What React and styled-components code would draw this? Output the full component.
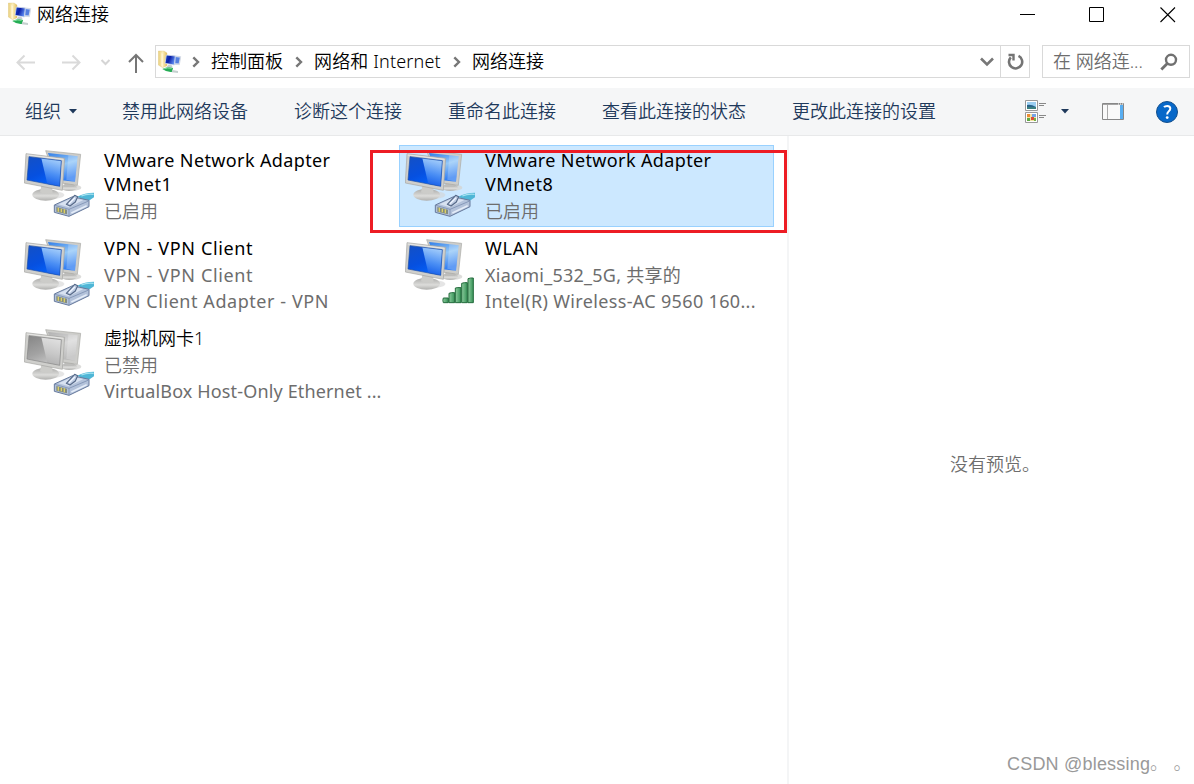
import React from 'react';
import styled, { createGlobalStyle } from 'styled-components';

const GlobalStyle = createGlobalStyle`
  * {
    box-sizing: border-box;
  }

  body {
    margin: 0;
    background: #fff;
    font-family: "Noto Sans", "Noto Sans CJK SC", sans-serif;
    font-size: 18px;
    overflow: hidden;
  }

  svg {
    display: block;
    flex: none;
  }
`;

const Window = styled.div`
  position: relative;
  width: 1194px;
  height: 784px;
  display: flex;
  flex-direction: column;
  background: #fff;
  white-space: nowrap;
`;

const TitleBar = styled.header`
  height: 45px;
  padding: 2px 18px 0 8px;
  display: flex;
  align-items: flex-start;
`;

const Title = styled.h1`
  flex: 1;
  margin: 0 0 0 5px;
  font-family: "Noto Sans CJK SC", sans-serif;
  font-size: 18px;
  font-weight: 350;
  line-height: 22px;
  color: #000;
`;

const WindowButtons = styled.div`
  display: flex;
  gap: 54px;
  padding-top: 5px;
`;

const AddressRow = styled.div`
  height: 43px;
  padding: 0 4px 0 16px;
  display: flex;
  align-items: flex-start;
`;

const NavButtons = styled.nav`
  width: 139px;
  height: 34px;
`;

const AddressBox = styled.div`
  width: 875px;
  height: 33px;
  border: 1px solid #d9d9d9;
  display: flex;
  align-items: center;
  padding-left: 2px;
`;

const Crumbs = styled.div`
  flex: 1;
  display: flex;
  align-items: center;
  margin-left: 10px;
`;

const Crumb = styled.span`
  margin: 0 9px 0 11px;
  width: ${({ $width }) => $width}px;
  font-weight: 350;
  line-height: 28px;
  padding-bottom: 2px;
  letter-spacing: ${({ $spacing }) => $spacing || 0}px;
  color: #000;
`;

const RefreshButton = styled.div`
  width: 29px;
  height: 31px;
  margin-left: 5px;
  padding-left: 2px;
  border-left: 1px solid #d9d9d9;
  display: flex;
  align-items: center;
  justify-content: center;
`;

const SearchBox = styled.div`
  width: 148px;
  height: 33px;
  margin-left: 12px;
  padding: 0 11px 0 10px;
  border: 1px solid #d9d9d9;
  display: flex;
  align-items: center;
  justify-content: space-between;
  font-weight: 350;
  color: #6d6d6d;

  span {
    padding-bottom: 3px;
  }
`;

const Toolbar = styled.div`
  height: 48px;
  padding: 0 16px 0 25px;
  display: flex;
  align-items: center;
  background: #f5f6f7;
  border-bottom: 1px solid #e8e9ea;
`;

const Command = styled.span`
  margin-right: ${({ $menu }) => ($menu ? 45 : 46)}px;
  padding-bottom: 4px;
  display: flex;
  align-items: center;
  gap: 8px;
  font-family: "Noto Sans CJK SC", sans-serif;
  font-weight: 350;
  line-height: 26px;
  color: #1e395b;

  svg {
    margin-top: 4px;
  }
`;

const ToolIcons = styled.div`
  margin-left: auto;
  display: flex;
  align-items: center;
`;

const Spacer = styled.span`
  width: ${({ $size }) => $size}px;
`;

const Content = styled.main`
  flex: 1;
  display: flex;
`;

const FileArea = styled.section`
  width: 787px;
  padding: 9px 0 0 18px;
  display: grid;
  grid-template-columns: 375px 375px;
  grid-template-rows: 82px 83px 84px;
  row-gap: 7px;
  column-gap: 6px;
`;

const Item = styled.article`
  padding: 4px 5px;
  display: flex;
  align-items: flex-start;
  border: 1px solid ${({ $selected }) => ($selected ? '#99d1ff' : 'transparent')};
  background: ${({ $selected }) => ($selected ? '#cce8ff' : 'transparent')};
`;

const ItemText = styled.div`
  margin-left: 8px;
  margin-top: ${({ $top }) => $top}px;
`;

const Line = styled.div`
  height: ${({ $height }) => $height}px;
  line-height: 24px;
  font-weight: ${({ $cjk }) => ($cjk ? 350 : 400)};
  color: ${({ $muted }) => ($muted ? '#6d6d6d' : '#000')};
  letter-spacing: ${({ $spacing }) => $spacing || 0}px;
`;

const Preview = styled.aside`
  flex: 1;
  border-left: 2px solid #f4f5f6;
  padding: 314px 0 0 161px;
  font-family: "Noto Sans CJK SC", sans-serif;
  font-weight: 350;
  line-height: 26px;
  color: #6d6d6d;
`;

const Highlight = styled.div`
  position: absolute;
  left: 370px;
  top: 150px;
  width: 417px;
  height: 83px;
  border: 3px solid #ed1c24;
`;

const Watermark = styled.div`
  position: absolute;
  left: 1007px;
  top: 752px;
  font-family: "Liberation Sans", "Noto Sans CJK SC", sans-serif;
  font-size: 18px;
  font-weight: 300;
  line-height: 24px;
  letter-spacing: 0.2px;
  color: #999;
`;

const FolderIcon = () => (
  <svg width="24" height="24" viewBox="24 5 72 72">
    <defs>
      <linearGradient id="folder" x1="0" x2="1">
        <stop offset="0" stopColor="#e9cf7c" />
        <stop offset="0.5" stopColor="#fbeebc" />
        <stop offset="1" stopColor="#e3bf5c" />
      </linearGradient>
      <linearGradient id="smallScreen" x1="0" y1="0" x2="1" y2="0.4">
        <stop offset="0" stopColor="#1648c8" />
        <stop offset="0.5" stopColor="#0b1fa8" />
        <stop offset="1" stopColor="#5d8cf0" />
      </linearGradient>
    </defs>
    <path d="M25 8 L42 8 L51 14 L51 52 L38 58 L25 50 Z" fill="url(#folder)" stroke="#dcc27a" strokeWidth="1" />
    <path d="M34 14 L39 17 V56 L34 53 Z" fill="#fff4cf" />
    <path d="M66 22 L92 25 L88 49 L66 47 Z" fill="#b5c9ee" stroke="#d5dbe5" strokeWidth="3" />
    <path d="M76 26 L89 28 L86 45 L76 44 Z" fill="#547fe0" />
    <path d="M49 20 L76 23 L73 50 L45 45 Z" fill="url(#smallScreen)" stroke="#d2dbea" strokeWidth="2.5" />
    <path d="M55 49 L65 51 L68 57 L49 57 Z" fill="#c4cbd1" />
    <path d="M37 62 Q53 54 69 59 L66 71 Q52 73 37 62" fill="#25ad55" />
    <path d="M40 62 Q53 57 65 60" fill="none" stroke="#82dc9c" strokeWidth="3" />
    <path d="M67 65 L84 68 L84 74 L65 72 Z" fill="#c5d0cf" />
  </svg>
);

const AdapterIcon = ({ id, disabled, wifi }) => (
  <svg width="72" height="72" viewBox="72 42 216 216">
    <defs>
      <linearGradient id={`${id}-front`} x1="0" y1="0" x2="0.5" y2="1">
        <stop offset="0" stopColor={disabled ? '#858585' : '#1450c4'} />
        <stop offset="0.6" stopColor={disabled ? '#a3a3a3' : '#0650e0'} />
        <stop offset="1" stopColor={disabled ? '#c4c4c4' : '#0462fa'} />
      </linearGradient>
      <linearGradient id={`${id}-shine`} x1="0.3" y1="0" x2="0.1" y2="1">
        <stop offset="0" stopColor={disabled ? '#dedede' : '#9cc8fa'} />
        <stop offset="0.5" stopColor={disabled ? '#c8c8c8' : '#4a8ef4'} />
        <stop offset="1" stopColor={disabled ? '#adadad' : '#0a55e8'} />
      </linearGradient>
      <linearGradient id={`${id}-back`} x1="0" y1="0" x2="0.3" y2="1">
        <stop offset="0" stopColor={disabled ? '#b0b0b0' : '#2f7de8'} />
        <stop offset="0.5" stopColor={disabled ? '#d9d9d9' : '#94c8f8'} />
        <stop offset="1" stopColor={disabled ? '#bcbcbc' : '#3580f2'} />
      </linearGradient>
      <linearGradient id={`${id}-base`} x1="0" y1="0" x2="0" y2="1">
        <stop offset="0" stopColor="#a9a9a7" />
        <stop offset="0.6" stopColor="#dcdcda" />
        <stop offset="1" stopColor="#b0b0ae" />
      </linearGradient>
      <linearGradient id={`${id}-bars`} x1="0" y1="0" x2="1" y2="0">
        <stop offset="0" stopColor="#8ccb9d" />
        <stop offset="1" stopColor="#369257" />
      </linearGradient>
    </defs>
    <ellipse cx="219" cy="155" rx="25" ry="9" fill="#d4d4d2" opacity="0.8" />
    <ellipse cx="207" cy="155" rx="24" ry="10" fill={`url(#${id}-base)`} />
    <path d="M194 135 H220 L223 153 H192 Z" fill="#bdbdbb" />
    <path d="M137 44 L242 55 L232 148 L170 139 Z" fill="#cdcdca" stroke="#a9a9a5" strokeWidth="2" strokeLinejoin="round" />
    <path d="M144 51 L233 61 L225 137 L170 131 Z" fill={`url(#${id}-back)`} />
    <path d="M205 58 L233 61 L225 137 L199 131 Z" fill="#fff" opacity="0.22" />
    <ellipse cx="154" cy="177" rx="39" ry="12" fill="#d4d4d4" opacity="0.6" />
    <ellipse cx="137" cy="176" rx="40" ry="18" fill={`url(#${id}-base)`} />
    <path d="M124 149 H155 L158 170 Q141 179 120 169 Z" fill="#ccccc9" />
    <path d="M78 53 L194 67 L187 163 L73 141 Z" fill="#cfcfcc" stroke="#a5a5a1" strokeWidth="2" strokeLinejoin="round" />
    <path d="M80 57 L190 70" fill="none" stroke="#e8e8e6" strokeWidth="3" />
    <path d="M87 62 L184 74 L179 151 L81 132 Z" fill={`url(#${id}-front)`} />
    <path d="M124 67 L184 74 L179 151 L142 144 Z" fill={`url(#${id}-shine)`} />
    <path d="M87 62 L184 74 L179 151 L81 132 Z" fill="none" stroke={disabled ? '#858585' : '#1c4ea8'} strokeWidth="2" />
    {wifi ? (
      <g fill={`url(#${id}-bars)`} stroke="#246b3d" strokeWidth="3" strokeLinejoin="round">
        <path d="M187 219 H202 V233 H187 Q184 226 187 219 Z" />
        <path d="M204 205 Q211 202 221 203 V233 H204 Z" />
        <path d="M223 189 Q230 187 240 188 V233 H223 Z" />
        <path d="M242 175 Q250 172 259 173 V233 H242 Z" />
        <path d="M261 161 Q269 158 277 159 V233 H261 Z" />
      </g>
    ) : (
      <g strokeLinejoin="round">
        <path d="M232 182 Q254 170 282 170 L282 184 L262 197 Z" fill="#4fb6d6" />
        <path d="M244 180 Q260 173 281 175" fill="none" stroke="#a5e2f0" strokeWidth="4" />
        <path d="M163 207 L218 182 L267 193 L267 212 L207 241 L163 229 Z" fill="#b3c2da" stroke="#66799c" strokeWidth="3" />
        <path d="M164 208 L207 220 L266 195 M207 220 V240" fill="none" stroke="#7d90b2" strokeWidth="2.5" />
        <path d="M175 205 L218 186 L250 192 L207 214 Z" fill="#d8e2f1" />
        <path d="M199 205 L224 178 L233 182 L226 198 L210 210 Z" fill="#bccae0" stroke="#566988" strokeWidth="3.5" />
        <path d="M207 203 L225 185" stroke="#eef4ff" strokeWidth="4" />
        <path d="M169 213 L201 221 V235 L169 227 Z" fill="#848d80" />
        <path d="M175 215 V227 M184 218 V229 M193 220 V232" stroke="#ddd165" strokeWidth="4" />
        <path d="M214 231 L260 209" stroke="#e4ecf8" strokeWidth="5" />
      </g>
    )}
  </svg>
);

const Separator = () => (
  <svg width="8" height="12" viewBox="0 0 8 12">
    <path d="M1.3 1.3 L6 6 L1.3 10.7" fill="none" stroke="#777" strokeWidth="2.4" />
  </svg>
);

const DropArrow = () => (
  <svg width="8" height="5" viewBox="0 0 8 5">
    <path d="M0 0 H8 L4 4.5 Z" fill="#1e395b" />
  </svg>
);

const NavIcons = () => (
  <svg width="139" height="34" viewBox="16 45 139 34" fill="none" strokeWidth="2">
    <path d="M35 62.5 H17 M24.5 55.5 L17.5 62.5 L24.5 69.5" stroke="#dadada" />
    <path d="M62 62.5 H80 M72.5 55.5 L79.5 62.5 L72.5 69.5" stroke="#dadada" />
    <path d="M101.5 60 L105.5 64 L109.5 60" stroke="#d5d5d5" />
    <path d="M136 73 V55 M129 62 L136 55 L143 62" stroke="#767676" />
  </svg>
);

const ViewIcon = () => (
  <svg width="22" height="24" viewBox="0 0 22 24">
    <path d="M0.5 0.5 H12.5 V10.5 H0.5 Z M0.5 12.5 H12.5 V22.5 H0.5 Z" fill="#fff" stroke="#999" />
    <path d="M2 2 H11 V9 H2 Z" fill="#9ccff2" />
    <path d="M2 5 Q6 4 11 7 V9 H2 Z" fill="#28648a" />
    <path d="M2 8 H11" stroke="#4f9c76" />
    <path d="M2 14 H11 V21 H2 Z" fill="#f3e2a3" />
    <path d="M2 14 H5 V17 H2 Z" fill="#ec8d35" />
    <path d="M7 14 H11 V17 H7 Z" fill="#75a5e7" />
    <path d="M2 18 H5 V21 H2 Z" fill="#5faa42" />
    <path d="M6 17 H9 V20 H6 Z" fill="#dd4d35" />
    <path d="M9 18 H11 V21 H9 Z" fill="#73b548" />
    <path d="M14 3.5 H21 M14 5.5 H19 M14 15.5 H21 M14 17.5 H19" stroke="#888" />
  </svg>
);

const PaneIcon = () => (
  <svg width="22" height="17" viewBox="0 0 22 17">
    <path d="M0.5 0.5 H21.5 V16.5 H0.5 Z" fill="#f9f9f9" stroke="#878787" />
    <path d="M1 1 H21" stroke="#878787" strokeWidth="1.5" />
    <path d="M5.5 2 V16" stroke="#aaa" />
    <path d="M18 2 H21 V16 H18 Z" fill="#58aef2" />
    <path d="M16 1 H17 M18 1 H19 M20 1 H21" stroke="#fff" />
  </svg>
);

const HelpIcon = () => (
  <svg width="22" height="22" viewBox="0 0 22 22">
    <circle cx="11" cy="11" r="10.5" fill="#0868c9" stroke="#14508d" />
    <path d="M8 6.2 Q9 4.9 11.2 4.9 Q14.3 4.9 14.3 7.6 Q14.3 9.2 12.6 10.5 Q11.2 11.6 11.2 13.6" fill="none" stroke="#fff" strokeWidth="2" />
    <circle cx="11.2" cy="16.6" r="1.4" fill="#fff" />
  </svg>
);

const commands = ['禁用此网络设备', '诊断这个连接', '重命名此连接', '查看此连接的状态', '更改此连接的设置'];

const connections = [
  {
    id: 'vmnet1',
    top: -2,
    lines: [
      { text: 'VMware Network Adapter', height: 24, spacing: 0.37 },
      { text: 'VMnet1', height: 27, spacing: 0.5 },
      { text: '已启用', height: 26, muted: true, cjk: true },
    ],
  },
  {
    id: 'vmnet8',
    top: -2,
    selected: true,
    lines: [
      { text: 'VMware Network Adapter', height: 24, spacing: 0.37 },
      { text: 'VMnet8', height: 27, spacing: 0.5 },
      { text: '已启用', height: 26, muted: true, cjk: true },
    ],
  },
  {
    id: 'vpn',
    top: -3,
    lines: [
      { text: 'VPN - VPN Client', height: 27, spacing: 0.64 },
      { text: 'VPN - VPN Client', height: 26, muted: true, spacing: 0.64 },
      { text: 'VPN Client Adapter - VPN', height: 24, muted: true, spacing: 0.56 },
    ],
  },
  {
    id: 'wlan',
    top: -3,
    wifi: true,
    lines: [
      { text: 'WLAN', height: 27, spacing: 0.8 },
      { text: 'Xiaomi_532_5G, 共享的', height: 26, muted: true, spacing: 0.25 },
      { text: 'Intel(R) Wireless-AC 9560 160...', height: 24, muted: true, spacing: 0.34 },
    ],
  },
  {
    id: 'virtualbox',
    top: -3,
    disabled: true,
    lines: [
      { text: '虚拟机网卡1', height: 27, cjk: true },
      { text: '已禁用', height: 26, muted: true, cjk: true },
      { text: 'VirtualBox Host-Only Ethernet ...', height: 24, muted: true, spacing: 0.15 },
    ],
  },
];

const Connection = ({ id, lines, top, selected, disabled, wifi }) => (
  <Item $selected={selected}>
    <AdapterIcon id={id} disabled={disabled} wifi={wifi} />
    <ItemText $top={top}>
      {lines.map((line, index) => (
        <Line key={index} $height={line.height} $muted={line.muted} $cjk={line.cjk} $spacing={line.spacing}>
          {line.text}
        </Line>
      ))}
    </ItemText>
  </Item>
);

const App = () => (
  <>
    <GlobalStyle />
    <Window>
      <TitleBar>
        <FolderIcon />
        <Title>网络连接</Title>
        <WindowButtons>
          <svg width="15" height="16"><path d="M0 7.5 H15" stroke="#000" /></svg>
          <svg width="17" height="16"><path d="M0.5 0.5 H14.5 V14.5 H0.5 Z" fill="none" stroke="#000" /></svg>
          <svg width="16" height="16"><path d="M0.5 0.5 L15 15 M15 0.5 L0.5 15" stroke="#000" strokeWidth="1.1" /></svg>
        </WindowButtons>
      </TitleBar>

      <AddressRow>
        <NavButtons><NavIcons /></NavButtons>
        <AddressBox>
          <FolderIcon />
          <Crumbs>
            <Separator />
            <Crumb $width={75}>控制面板</Crumb>
            <Separator />
            <Crumb $width={130} $spacing={0.15}>网络和 Internet</Crumb>
            <Separator />
            <Crumb>网络连接</Crumb>
          </Crumbs>
          <svg width="14" height="10" viewBox="0 0 14 10">
            <path d="M1 1.5 L7 7.5 L13 1.5" fill="none" stroke="#777" strokeWidth="2.6" />
          </svg>
          <Spacer $size={1} />
          <RefreshButton>
            <svg width="18" height="18" viewBox="0 0 18 18">
              <path d="M11.5 2.9 A6.6 6.6 0 1 1 3.8 4.3" fill="none" stroke="#747474" strokeWidth="2.6" />
              <path d="M1.5 2 H6.5 V7.5" fill="none" stroke="#747474" strokeWidth="2.4" />
            </svg>
          </RefreshButton>
        </AddressBox>
        <SearchBox>
          <span>在 网络连...</span>
          <svg width="18" height="18" viewBox="0 0 18 18">
            <circle cx="11" cy="6.8" r="5" fill="none" stroke="#707070" strokeWidth="2.4" />
            <path d="M7.3 10.5 L1.3 16.5" stroke="#707070" strokeWidth="2.8" />
          </svg>
        </SearchBox>
      </AddressRow>

      <Toolbar>
        <Command $menu>组织<DropArrow /></Command>
        {commands.map((command) => (
          <Command key={command}>{command}</Command>
        ))}
        <ToolIcons>
          <ViewIcon />
          <Spacer $size={14} />
          <DropArrow />
          <Spacer $size={33} />
          <PaneIcon />
          <Spacer $size={32} />
          <HelpIcon />
        </ToolIcons>
      </Toolbar>

      <Content>
        <FileArea>
          {connections.map((connection) => (
            <Connection key={connection.id} {...connection} />
          ))}
        </FileArea>
        <Preview>没有预览。</Preview>
      </Content>

      <Highlight />
      <Watermark>CSDN @blessing。 。</Watermark>
    </Window>
  </>
);

export default App;
